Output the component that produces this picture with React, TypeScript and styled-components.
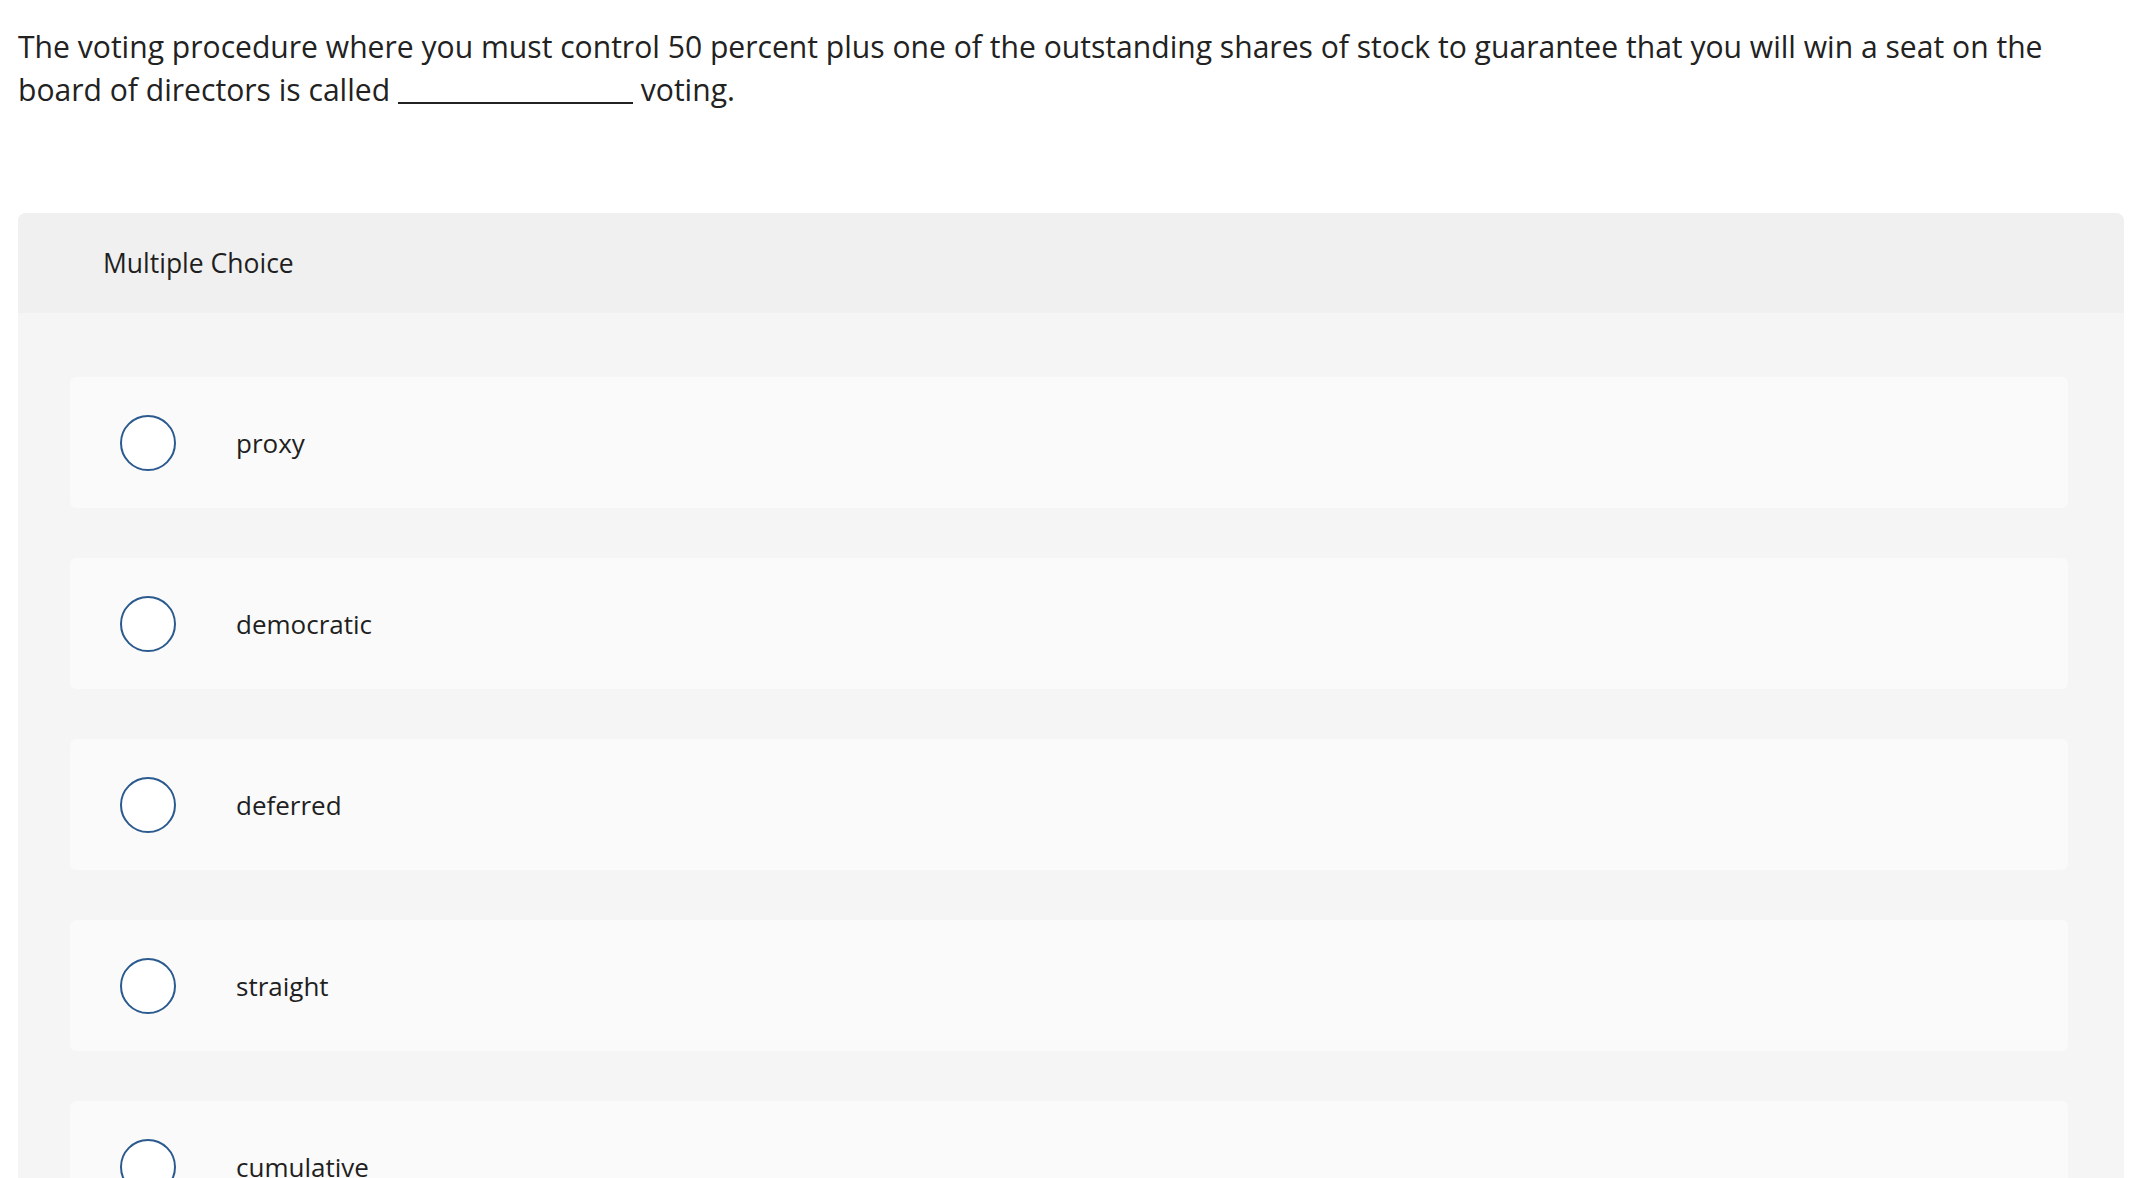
import styled, { createGlobalStyle } from 'styled-components'

const GlobalStyle = createGlobalStyle`
    html, body {
        margin: 0;
        padding: 0;
        background: #ffffff;
    }
    body {
        font-family: "Open Sans", Lato, Arial, sans-serif;
        color: #1f1f1f;
    }
`

const choices = ['proxy', 'democratic', 'deferred', 'straight', 'cumulative']

const App = () => {
    return <Page>
        <GlobalStyle />
        <Question>
            The voting procedure where you must control 50 percent plus one of the outstanding shares of stock to guarantee that you will win a seat on the board of directors is called <Blank /> voting.
        </Question>
        <Panel>
            <PanelHeader>Multiple Choice</PanelHeader>
            <ChoiceList>
                {choices.map(c => <Choice key={c}>
                    <Radio />
                    <ChoiceLabel>{c}</ChoiceLabel>
                </Choice>)}
            </ChoiceList>
        </Panel>
    </Page>
}

export default App

const Page = styled.div`
    width: 2106px;
    padding: 25px 0 0 18px;
`

const Question = styled.p`
    margin: 0;
    max-width: 2080px;
    font-size: 30.1px;
    line-height: 43px;
    color: #222222;
`

const Blank = styled.span`
    display: inline-block;
    width: 235px;
    height: 0;
    border-bottom: 2px solid #222222;
    vertical-align: -3px;
`

const Panel = styled.section`
    margin-top: 102px;
    background: #f5f5f5;
    border-radius: 8px 8px 0 0;
    overflow: hidden;
`

const PanelHeader = styled.div`
    height: 100px;
    display: flex;
    align-items: center;
    padding-left: 85px;
    background: #f0f0f0;
    font-size: 26.5px;
    color: #1f1f1f;
`

const ChoiceList = styled.div`
    display: flex;
    flex-direction: column;
    gap: 50px;
    padding: 64px 56px 60px 52px;
`

const Choice = styled.label`
    display: flex;
    align-items: center;
    height: 131px;
    padding-left: 50px;
    background: #fafafa;
    border-radius: 6px;
    cursor: pointer;
`

const Radio = styled.span`
    box-sizing: border-box;
    width: 56px;
    height: 56px;
    border-radius: 50%;
    border: 2px solid #2b5a8f;
    background: #ffffff;
    flex-shrink: 0;
`

const ChoiceLabel = styled.span`
    margin-left: 60px;
    font-size: 26px;
    color: #1f1f1f;
`
